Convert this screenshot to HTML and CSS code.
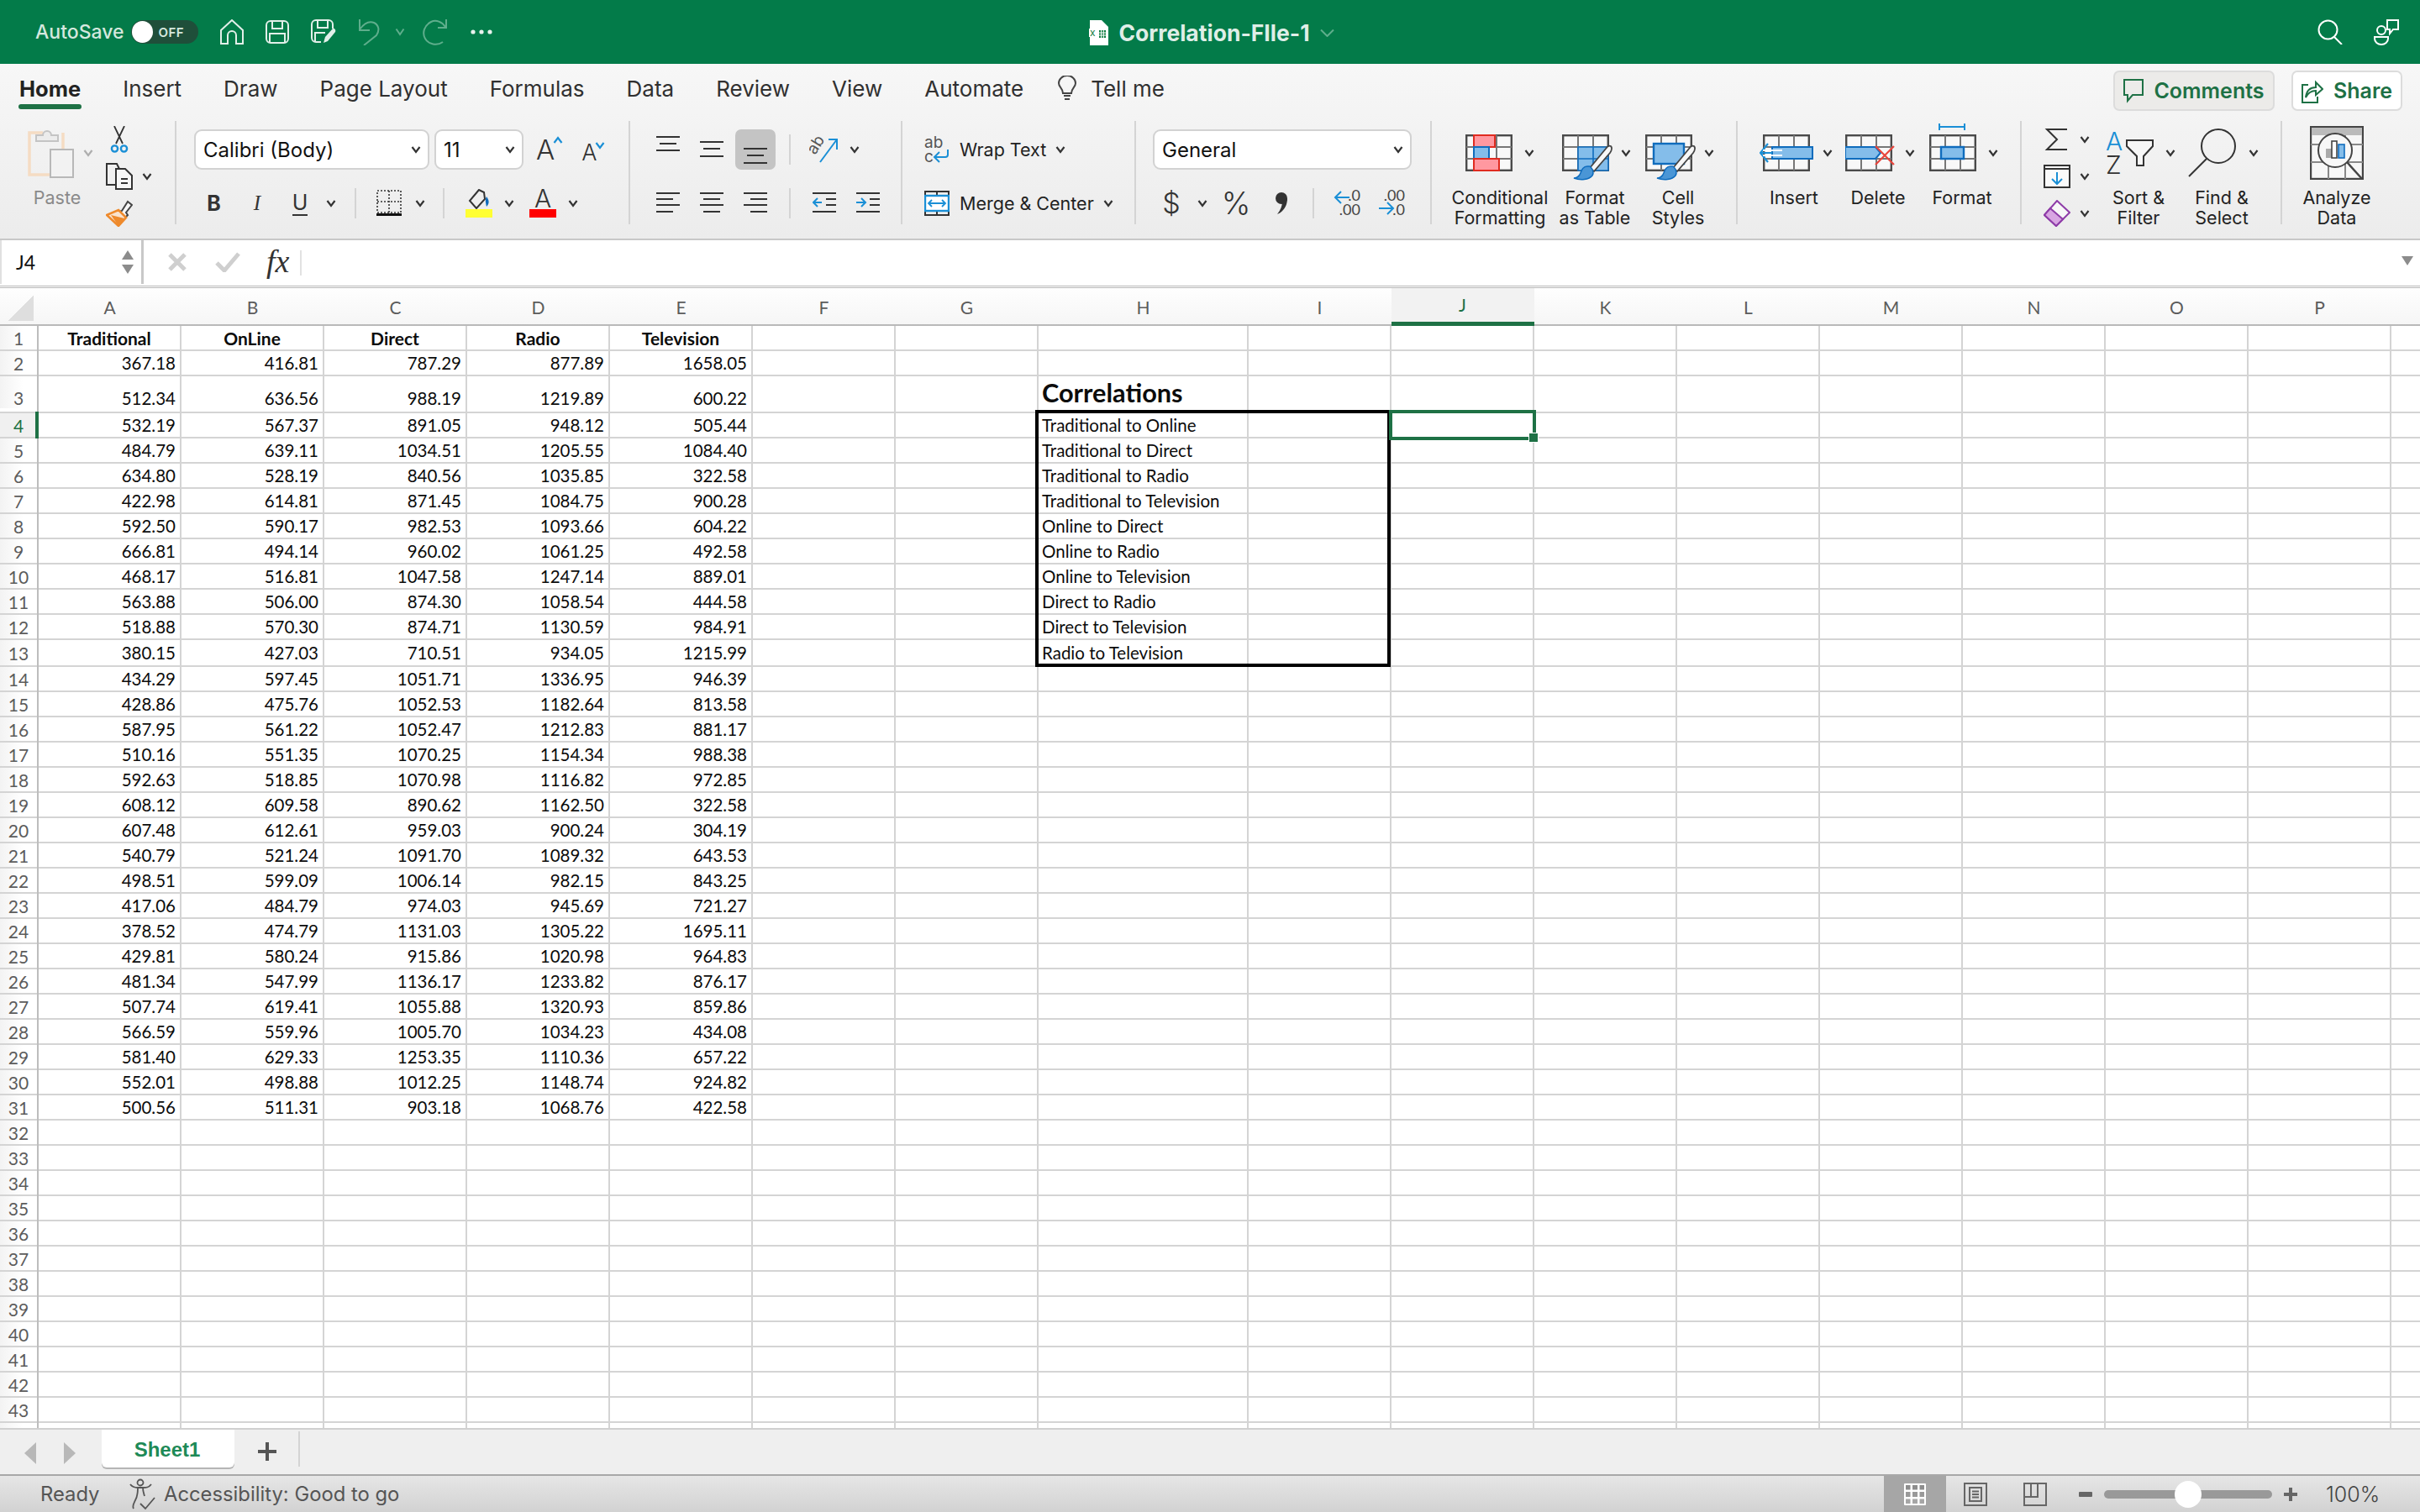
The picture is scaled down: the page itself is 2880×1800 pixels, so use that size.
FILE: index.html
```html
<!DOCTYPE html>
<html lang="en">
<head>
<meta charset="utf-8">
<title>Correlation-FIle-1</title>
<link rel="stylesheet" href="styles.css">
</head>
<body>
<svg class="sprite" width="0" height="0">
  <defs>
    <symbol id="chev" viewBox="0 0 12 10"><path d="M1.5 2 L6 8 L10.5 2" fill="none" stroke="#333" stroke-width="2.2"/></symbol>
    <g id="brush">
      <path d="M58 14 C56 13 54 14 52 17 L33 40 L38 44 L57 22 C59 19 60 16 58 14Z" fill="#f7f7f7" stroke="#444" stroke-width="1.8"/>
      <path d="M30 38 C24 38 23 44 21 48 C19 51 16 52 14 52 C22 55 32 54 36 49 C38 46 37 41 33 38Z" fill="#4a96d6" stroke="#0f6cbd" stroke-width="1.5"/>
    </g>
    <g id="gridlg" fill="#f8f8f8" stroke="#4a4a4a" stroke-width="2.4">
      <rect x="1.2" y="1.2" width="53.6" height="41.6"/>
      <path d="M19 1V43M37 1V43M1 15H55M1 29H55" fill="none" stroke="#777" stroke-width="2"/>
    </g>
  </defs>
</svg>

<header class="titlebar">
  <div class="tb-left">
    <span class="autosave">AutoSave</span>
    <span class="toggle"><i class="knob"></i><span class="off">OFF</span></span>
    <svg class="ic-home" width="28" height="30" viewBox="0 0 28 30"><path d="M1 13 L14 1 L27 13 V29 H19 V19 a5 5 0 0 0 -10 0 V29 H1Z" fill="none" stroke="#e2efe9" stroke-width="2"/></svg>
    <svg width="28" height="28" viewBox="0 0 28 28"><g fill="none" stroke="#e2efe9" stroke-width="2"><rect x="1" y="1" width="26" height="26" rx="5"/><path d="M8 1V10H20V1M5 27V16H23V27"/></g></svg>
    <svg width="30" height="30" viewBox="0 0 30 30"><g fill="none" stroke="#e2efe9" stroke-width="2"><path d="M12 27H6 a5 5 0 0 1 -5 -5 V6 a5 5 0 0 1 5 -5 H21 a5 5 0 0 1 5 5 V11"/><path d="M8 1V10H20V1M5 27V16H17"/></g><path d="M15 28 L17 21 L26 11 C28 10 30 13 29 15 L20 26Z" fill="#e2efe9"/></svg>
    <svg class="dim" width="26" height="32" viewBox="0 0 26 32"><path d="M2 1 V14 H14 M2 13 C8 5 14 3 19 5 C25 8 26 14 22 20 L7 32" fill="none" stroke="#5fae8c" stroke-width="2"/></svg>
    <svg class="tight" width="12" height="10" viewBox="0 0 12 10"><path d="M1.5 1.5 L6 8 L10.5 1.5" fill="none" stroke="#5fae8c" stroke-width="2"/></svg>
    <svg class="tight2" width="32" height="32" viewBox="0 0 32 32"><path d="M29 1 V11 H19 M28 10 C24 4 17 1 11 4 C3 8 0 17 4 24 C8 31 18 33 25 28" fill="none" stroke="#5fae8c" stroke-width="2"/></svg>
    <svg width="26" height="6" viewBox="0 0 26 6"><circle cx="3" cy="3" r="2.6" fill="#e8f2ed"/><circle cx="13" cy="3" r="2.6" fill="#e8f2ed"/><circle cx="23" cy="3" r="2.6" fill="#e8f2ed"/></svg>
  </div>
  <div class="doc">
    <svg width="23" height="30" viewBox="0 0 23 30"><path d="M1 0 H15 L23 8 V30 H1Z" fill="#fff"/><rect x="0" y="10" width="10" height="10" fill="#fff"/><text class="st" x="1" y="19" font-size="12" fill="#107c41">x</text><path d="M12 12H20V21H12Z" fill="#107c41"/><path d="M14.6 12V21M17.3 12V21M12 15H20M12 18H20" stroke="#fff"/></svg>
    <span class="docname">Correlation-FIle-1</span>
    <svg width="17" height="10" viewBox="0 0 17 10"><path d="M1 1.5 L8.5 9 L16 1.5" fill="none" stroke="#5fae8c" stroke-width="2"/></svg>
  </div>
  <div class="tb-right">
    <svg width="30" height="30" viewBox="0 0 30 30"><circle cx="12.5" cy="12.5" r="11" fill="none" stroke="#fff" stroke-width="2"/><path d="M20 21 L29 30" stroke="#fff" stroke-width="2"/></svg>
    <svg width="32" height="32" viewBox="0 0 32 32"><g fill="none" stroke="#fff" stroke-width="2"><circle cx="10" cy="14" r="5"/><path d="M2 22 H18 V24 a8 7 0 0 1 -16 0Z"/><path d="M17 2 H30 V13 H24 L20 18 V13 H17Z"/></g></svg>
  </div>
</header>

<section class="ribbon">
  <nav class="tabs">
    <span class="tab on">Home</span>
    <span class="tab">Insert</span>
    <span class="tab">Draw</span>
    <span class="tab">Page Layout</span>
    <span class="tab">Formulas</span>
    <span class="tab">Data</span>
    <span class="tab">Review</span>
    <span class="tab">View</span>
    <span class="tab">Automate</span>
    <svg class="bulb" width="24" height="30" viewBox="0 0 24 30"><path d="M7 21 C7 15 2 14 2 9 a10 9 0 0 1 20 0 C22 14 17 15 17 21Z M8 24H16M9 28H15" fill="none" stroke="#444" stroke-width="2"/></svg>
    <span class="tab tell">Tell me</span>
    <div class="actions">
      <span class="btn comments"><svg width="24" height="30" viewBox="0 0 24 30"><path d="M1 2 H23 V20 H11 L5 27 V20 H1Z" fill="none" stroke="#1e7145" stroke-width="2"/></svg>Comments</span>
      <span class="btn share"><svg width="26" height="30" viewBox="0 0 26 30"><path d="M8 8 H1 V29 H19 V22" fill="none" stroke="#1e7145" stroke-width="2"/><path d="M5 23 C6 14 11 11 17 11 V5 L25 13 L17 20 V15 C12 15 8 17 5 23Z" fill="none" stroke="#1e7145" stroke-width="2"/></svg>Share</span>
    </div>
  </nav>

  <div class="groups">
    <div class="g g-clip">
      <div class="big paste">
        <div class="top">
          <svg width="56" height="60" viewBox="0 0 56 60"><path d="M18 6 H2 V56 H30" fill="none" stroke="#f5dcc3" stroke-width="3.5"/><path d="M42 6 V26" stroke="#f5dcc3" stroke-width="3.5"/><path d="M10 16 V9 H18 a5 5 0 0 1 10 0 H36 V16Z" fill="#ececec" stroke="#c4c4c4" stroke-width="2"/><rect x="27" y="26" width="27" height="33" fill="#f2f2f2" stroke="#b8b8b8" stroke-width="2"/></svg>
          <svg class="chev faded"><use href="#chev"/></svg>
        </div>
        <span class="lab muted">Paste</span>
      </div>
      <div class="stack">
        <div class="si"><svg width="32" height="32" viewBox="0 0 32 32"><path d="M10 0 L20 21 M22 0 L12 21" stroke="#333" stroke-width="1.8"/><circle cx="10.5" cy="27" r="3.6" fill="none" stroke="#1a8fd6" stroke-width="2.4"/><circle cx="21.5" cy="27" r="3.6" fill="none" stroke="#1a8fd6" stroke-width="2.4"/></svg></div>
        <div class="si"><svg width="32" height="32" viewBox="0 0 32 32"><path d="M12 26 H1 V1 H13 L16 7" fill="none" stroke="#333" stroke-width="2"/><path d="M12 7 H23 L31 15 V31 H12Z M18 19H26M18 24H26" fill="#f7f7f7" stroke="#333" stroke-width="2"/></svg><svg class="chev"><use href="#chev"/></svg></div>
        <div class="si"><svg width="32" height="32" viewBox="0 0 32 32"><path d="M19 13 L26 2 L31 6 L24 15 L26 18 L23 21 L16 14Z" fill="#f7f7f7" stroke="#444" stroke-width="2"/><path d="M15 12 L24 21 L15 31 L1 18Z" fill="#f9e3cf" stroke="#ee8a2c" stroke-width="2.6"/><path d="M6 18 L15 31 L22 22Z" fill="#ee8a2c"/></svg></div>
      </div>
    </div>

    <div class="g g-font">
      <div class="line1 flex">
        <span class="dd dd-font">Calibri (Body)<svg class="chev"><use href="#chev"/></svg></span>
        <span class="dd dd-size">11<svg class="chev"><use href="#chev"/></svg></span>
        <span class="grow">A<svg width="12" height="10" viewBox="0 0 12 10"><path d="M1.5 8 L6 2 L10.5 8" fill="none" stroke="#1a8fd6" stroke-width="2.2"/></svg></span>
        <span class="shrink">A<svg width="12" height="10" viewBox="0 0 12 10"><path d="M1.5 2 L6 8 L10.5 2" fill="none" stroke="#1a8fd6" stroke-width="2.2"/></svg></span>
      </div>
      <div class="line2 font-tracks">
        <b class="fb">B</b>
        <i class="fi">I</i>
        <span class="fu">U</span>
        <svg class="chev"><use href="#chev"/></svg>
        <span class="vsep"></span>
        <svg width="30" height="32" viewBox="0 0 30 32"><path d="M1 1H29V27H1ZM15 1V27M1 14H29" fill="none" stroke="#333" stroke-width="1.6" stroke-dasharray="2 2"/><rect x="0" y="28" width="30" height="3" fill="#111"/></svg>
        <svg class="chev"><use href="#chev"/></svg>
        <span class="vsep"></span>
        <svg width="32" height="34" viewBox="0 0 32 34"><path d="M16 1 L5 14 L13 23 L23 12 L22 4Z" fill="none" stroke="#333" stroke-width="2"/><path d="M25 9 C28 13 29 17 25 21 C24 16 23 13 25 9Z" fill="#0f6cbd"/><rect x="0" y="24" width="32" height="10" fill="#ffff33"/></svg>
        <svg class="chev"><use href="#chev"/></svg>
        <svg width="32" height="34" viewBox="0 0 32 34"><text class="st thin" x="16" y="22" font-size="30" text-anchor="middle" fill="#333">A</text><rect x="0" y="24" width="32" height="10" fill="#ff0000"/></svg>
        <svg class="chev"><use href="#chev"/></svg>
      </div>
    </div>

    <div class="g g-align">
      <div class="line1 align-tracks">
        <svg width="48" height="48" viewBox="0 0 48 48"><path d="M10 9H38M14 17H34M10 25H38" stroke="#333" stroke-width="2"/></svg>
        <svg width="48" height="48" viewBox="0 0 48 48"><path d="M10 15H38M14 23H34M10 32H38" stroke="#333" stroke-width="2"/></svg>
        <svg class="pressed" width="48" height="48" viewBox="0 0 48 48"><path d="M10 23H38M14 31H34M10 40H38" stroke="#333" stroke-width="2"/></svg>
        <span class="vsep short"></span>
        <svg width="36" height="34" viewBox="0 0 36 34"><text class="st" x="0" y="0" font-size="19" fill="#555" transform="translate(7 24) rotate(-58)">ab</text><path d="M13 32 L33 5 M23 5 H33 V17" fill="none" stroke="#1a8fd6" stroke-width="2"/></svg>
        <svg class="chev orient-chev"><use href="#chev"/></svg>
      </div>
      <div class="line2 align-tracks">
        <svg width="28" height="28" viewBox="0 0 28 28"><path d="M0 2H28M0 9H20M0 16H28M0 24H20" stroke="#333" stroke-width="2"/></svg>
        <svg width="28" height="28" viewBox="0 0 28 28"><path d="M0 2H28M4 9H24M0 16H28M4 24H24" stroke="#333" stroke-width="2"/></svg>
        <svg width="28" height="28" viewBox="0 0 28 28"><path d="M0 2H28M8 9H28M0 16H28M8 24H28" stroke="#333" stroke-width="2"/></svg>
        <span class="vsep"></span>
        <svg width="28" height="28" viewBox="0 0 28 28"><path d="M0 2H28M16 9H28M16 16H28M0 24H28" stroke="#333" stroke-width="2"/><path d="M11 13H1M6 8L1 13L6 18" fill="none" stroke="#1a8fd6" stroke-width="2"/></svg>
        <svg width="28" height="28" viewBox="0 0 28 28"><path d="M0 2H28M16 9H28M16 16H28M0 24H28" stroke="#333" stroke-width="2"/><path d="M0 13H11M6 8L11 13L6 18" fill="none" stroke="#1a8fd6" stroke-width="2"/></svg>
      </div>
    </div>

    <div class="g g-wrap">
      <div class="line1 flex wrapline">
        <svg width="30" height="34" viewBox="0 0 30 34"><text class="st" x="0" y="15" font-size="19" fill="#555">ab</text><text class="st" x="0" y="32" font-size="19" fill="#555">c</text><path d="M28 17 V23 a3 3 0 0 1 -3 3 H13 M18 20 L12 26 L18 32" fill="none" stroke="#1a8fd6" stroke-width="2"/></svg>
        <span class="wtxt">Wrap Text</span>
        <svg class="chev"><use href="#chev"/></svg>
      </div>
      <div class="line2 flex wrapline">
        <svg width="30" height="30" viewBox="0 0 30 30"><rect x="1" y="1" width="28" height="28" fill="none" stroke="#333" stroke-width="2"/><path d="M15 1V6M15 24V29" stroke="#333" stroke-width="2"/><rect x="1" y="6" width="28" height="18" fill="#fff" stroke="#1a8fd6" stroke-width="2.4"/><path d="M5 15H25M9 11L5 15L9 19M21 11L25 15L21 19" fill="none" stroke="#1a8fd6" stroke-width="1.8"/></svg>
        <span class="wtxt">Merge &amp; Center</span>
        <svg class="chev"><use href="#chev"/></svg>
      </div>
    </div>

    <div class="g g-num">
      <div class="line1"><span class="dd dd-gen">General<svg class="chev"><use href="#chev"/></svg></span></div>
      <div class="line2 num-tracks">
        <span class="glyph">$</span>
        <svg class="chev"><use href="#chev"/></svg>
        <span class="glyph pct">%</span>
        <svg width="14" height="28" viewBox="0 0 14 28"><circle cx="7" cy="8" r="7" fill="#333"/><path d="M14 8 C14 18 9 24 2 27 C6 22 8 17 8 12Z" fill="#333"/></svg>
        <span class="vsep"></span>
        <svg width="34" height="34" viewBox="0 0 34 34"><text class="dec" x="32" y="14" font-size="18" fill="#444" text-anchor="end">.0</text><text class="dec" x="32" y="31" font-size="18" fill="#444" text-anchor="end">.00</text><path d="M19 10H2M9 3L2 10L9 17" fill="none" stroke="#1a8fd6" stroke-width="2"/></svg>
        <svg width="34" height="34" viewBox="0 0 34 34"><text class="dec" x="33" y="14" font-size="18" fill="#444" text-anchor="end">.00</text><text class="dec" x="33" y="31" font-size="18" fill="#444" text-anchor="end">.0</text><path d="M2 23H19M12 16L19 23L12 30" fill="none" stroke="#1a8fd6" stroke-width="2"/></svg>
      </div>
    </div>

    <div class="g g-styles flex">
      <div class="big w118">
        <div class="top">
          <svg class="ovf" width="56" height="44" viewBox="0 0 56 44"><use href="#gridlg"/><rect x="10" y="1" width="25" height="14" fill="#ff98a0" stroke="#e02b20" stroke-width="2"/><rect x="10" y="15" width="18" height="14" fill="#84bdea" stroke="#0f6cbd" stroke-width="2"/><rect x="10" y="29" width="30" height="14" fill="#ff98a0" stroke="#e02b20" stroke-width="2"/></svg>
          <svg class="chev"><use href="#chev"/></svg>
        </div>
        <span class="lab">Conditional<br>Formatting</span>
      </div>
      <div class="big w108">
        <div class="top nudge">
          <svg class="ovf" width="56" height="44" viewBox="0 0 56 44"><use href="#gridlg"/><path d="M19 15H55V43H19Z" fill="#84bdea" stroke="#0f6cbd" stroke-width="1.6"/><path d="M37 15V43M19 29H55" stroke="#0f6cbd" stroke-width="1.6"/><use href="#brush"/></svg>
          <svg class="chev"><use href="#chev"/></svg>
        </div>
        <span class="lab">Format<br>as Table</span>
      </div>
      <div class="big w90">
        <div class="top nudge">
          <svg class="ovf" width="56" height="44" viewBox="0 0 56 44"><use href="#gridlg"/><rect x="10" y="11" width="36" height="24" fill="#84bdea" stroke="#0f6cbd" stroke-width="2.4"/><use href="#brush"/></svg>
          <svg class="chev"><use href="#chev"/></svg>
        </div>
        <span class="lab">Cell<br>Styles</span>
      </div>
    </div>

    <div class="g g-cells flex">
      <div class="big w92">
        <div class="top nudge narrow">
          <svg width="64" height="44" viewBox="0 0 64 44"><g transform="translate(4 0)"><use href="#gridlg"/></g><rect x="15" y="15" width="48" height="14" fill="#84bdea" stroke="#0f6cbd" stroke-width="2"/><path d="M15 22H2M10 11L1 22L10 33" fill="none" stroke="#1a8fd6" stroke-width="2.2"/><path d="M4 19H27M4 25H27" stroke="#fff" stroke-width="2"/></svg>
          <svg class="chev"><use href="#chev"/></svg>
        </div>
        <span class="lab">Insert</span>
      </div>
      <div class="big w92 gapl">
        <div class="top nudge narrow">
          <svg width="60" height="44" viewBox="0 0 60 44"><use href="#gridlg"/><path d="M0 15H36L42 22L36 29H0Z" fill="#84bdea" stroke="#0f6cbd" stroke-width="2"/><path d="M36 14 L58 36 M58 14 L36 36" stroke="#e8453c" stroke-width="2.2"/></svg>
          <svg class="chev"><use href="#chev"/></svg>
        </div>
        <span class="lab">Delete</span>
      </div>
      <div class="big w92 gapl">
        <div class="top nudge">
          <svg class="ovf" width="56" height="44" viewBox="0 0 56 44"><path d="M12 -9H42M12 -13V-5M42 -13V-5" stroke="#1a8fd6" stroke-width="2"/><use href="#gridlg"/><rect x="14" y="15" width="27" height="14" fill="#84bdea" stroke="#0f6cbd" stroke-width="2.4"/></svg>
          <svg class="chev"><use href="#chev"/></svg>
        </div>
        <span class="lab">Format</span>
      </div>
    </div>

    <div class="g g-edit flex">
      <div class="stack">
        <div class="si"><svg width="32" height="28" viewBox="0 0 32 28"><path d="M28 2 H4 L16 14 L4 26 H28" fill="none" stroke="#333" stroke-width="2"/></svg><svg class="chev"><use href="#chev"/></svg></div>
        <div class="si"><svg width="32" height="28" viewBox="0 0 32 28"><rect x="1" y="1" width="30" height="26" fill="#fafafa" stroke="#333" stroke-width="2"/><path d="M1 5H31" stroke="#333" stroke-width="2"/><path d="M16 9V23M10 17L16 23L22 17" fill="none" stroke="#1a8fd6" stroke-width="2"/></svg><svg class="chev"><use href="#chev"/></svg></div>
        <div class="si"><svg width="32" height="32" viewBox="0 0 32 32"><path d="M16 1 L31 15 L15 31 L1 18Z" fill="#f7f7f7" stroke="#8e3ca8" stroke-width="2"/><path d="M8 10 L23 23 L15 31 L1 18Z" fill="#d8a5e2" stroke="#8e3ca8" stroke-width="2"/></svg><svg class="chev"><use href="#chev"/></svg></div>
      </div>
      <div class="big w90 sort">
        <div class="top nudge">
          <svg width="57" height="54" viewBox="0 0 57 54"><text class="st thin" x="0" y="24" font-size="30" fill="#1a8fd6">A</text><text class="st thin" x="0" y="52" font-size="30" fill="#333">Z</text><path d="M25 12 H56 V19 L45 31 V42 H37 V31 L25 19Z" fill="#f7f7f7" stroke="#333" stroke-width="2"/></svg>
          <svg class="chev"><use href="#chev"/></svg>
        </div>
        <span class="lab">Sort &amp;<br>Filter</span>
      </div>
      <div class="big w92 find">
        <div class="top nudge">
          <svg width="58" height="58" viewBox="0 0 58 58"><circle cx="36" cy="21" r="20" fill="none" stroke="#333" stroke-width="2"/><path d="M22 36 L1 57" stroke="#333" stroke-width="2"/></svg>
          <svg class="chev"><use href="#chev"/></svg>
        </div>
        <span class="lab">Find &amp;<br>Select</span>
      </div>
    </div>

    <div class="g g-an">
      <div class="big w100">
        <div class="top">
          <svg width="64" height="64" viewBox="0 0 64 64"><rect x="1" y="1" width="62" height="62" fill="#f7f7f7" stroke="#444" stroke-width="2.4"/><rect x="2" y="2" width="60" height="9" fill="#bbb"/><path d="M1 22H63M1 43H63M22 11V63M42 11V63" stroke="#888" stroke-width="2"/><path d="M44 43 L63 64" stroke="#444" stroke-width="2.4"/><circle cx="30" cy="29" r="20" fill="#f7f7f7" stroke="#444" stroke-width="2"/><rect x="19" y="27" width="7" height="11" fill="#aaa"/><rect x="26" y="18" width="6" height="20" fill="#fff" stroke="#444" stroke-width="1.6"/><rect x="34" y="22" width="7" height="16" fill="#84bdea" stroke="#0f6cbd" stroke-width="1.6"/></svg>
        </div>
        <span class="lab">Analyze<br>Data</span>
      </div>
    </div>
  </div>
</section>

<section class="fbar">
  <div class="namebox">
    <span class="cellref">J4</span>
    <span class="spin"><i class="tri up"></i><i class="tri down"></i></span>
  </div>
  <svg class="fb-x" width="24" height="24" viewBox="0 0 24 24"><path d="M3 3 L21 21 M21 3 L3 21" stroke="#cfcfcf" stroke-width="5"/></svg>
  <svg class="fb-c" width="30" height="24" viewBox="0 0 30 24"><path d="M2 13 L11 22 L28 2" fill="none" stroke="#cfcfcf" stroke-width="5"/></svg>
  <span class="fx">fx</span>
  <span class="fbsep"></span>
  <i class="tri down big-tri"></i>
</section>

<main class="sheet">
  <div class="colhead">
    <span class="corner"><i></i></span>
    <span class="ch">A</span><span class="ch">B</span><span class="ch">C</span><span class="ch">D</span><span class="ch">E</span><span class="ch">F</span><span class="ch">G</span>
    <span class="ch wide">H</span><span class="ch">I</span><span class="ch cur">J</span><span class="ch">K</span><span class="ch">L</span><span class="ch">M</span><span class="ch">N</span><span class="ch">O</span><span class="ch">P</span><span class="ch"></span>
  </div>

  <div class="rows">
    <div class="row"><span class="rh">1</span><span class="hd">Traditional</span><span class="hd">OnLine</span><span class="hd">Direct</span><span class="hd">Radio</span><span class="hd">Television</span></div>
    <div class="row"><span class="rh">2</span><span class="n">367.18</span><span class="n">416.81</span><span class="n">787.29</span><span class="n">877.89</span><span class="n">1658.05</span></div>
    <div class="row tall"><span class="rh">3</span><span class="n">512.34</span><span class="n">636.56</span><span class="n">988.19</span><span class="n">1219.89</span><span class="n">600.22</span><span class="title">Correlations</span></div>
    <div class="row"><span class="rh curh">4</span><span class="n">532.19</span><span class="n">567.37</span><span class="n">891.05</span><span class="n">948.12</span><span class="n">505.44</span><span class="t">Traditional to Online</span></div>
    <div class="row"><span class="rh">5</span><span class="n">484.79</span><span class="n">639.11</span><span class="n">1034.51</span><span class="n">1205.55</span><span class="n">1084.40</span><span class="t">Traditional to Direct</span></div>
    <div class="row"><span class="rh">6</span><span class="n">634.80</span><span class="n">528.19</span><span class="n">840.56</span><span class="n">1035.85</span><span class="n">322.58</span><span class="t">Traditional to Radio</span></div>
    <div class="row"><span class="rh">7</span><span class="n">422.98</span><span class="n">614.81</span><span class="n">871.45</span><span class="n">1084.75</span><span class="n">900.28</span><span class="t">Traditional to Television</span></div>
    <div class="row"><span class="rh">8</span><span class="n">592.50</span><span class="n">590.17</span><span class="n">982.53</span><span class="n">1093.66</span><span class="n">604.22</span><span class="t">Online to Direct</span></div>
    <div class="row"><span class="rh">9</span><span class="n">666.81</span><span class="n">494.14</span><span class="n">960.02</span><span class="n">1061.25</span><span class="n">492.58</span><span class="t">Online to Radio</span></div>
    <div class="row"><span class="rh">10</span><span class="n">468.17</span><span class="n">516.81</span><span class="n">1047.58</span><span class="n">1247.14</span><span class="n">889.01</span><span class="t">Online to Television</span></div>
    <div class="row"><span class="rh">11</span><span class="n">563.88</span><span class="n">506.00</span><span class="n">874.30</span><span class="n">1058.54</span><span class="n">444.58</span><span class="t">Direct to Radio</span></div>
    <div class="row"><span class="rh">12</span><span class="n">518.88</span><span class="n">570.30</span><span class="n">874.71</span><span class="n">1130.59</span><span class="n">984.91</span><span class="t">Direct to Television</span></div>
    <div class="row r13"><span class="rh">13</span><span class="n">380.15</span><span class="n">427.03</span><span class="n">710.51</span><span class="n">934.05</span><span class="n">1215.99</span><span class="t">Radio to Television</span></div>
    <div class="row"><span class="rh">14</span><span class="n">434.29</span><span class="n">597.45</span><span class="n">1051.71</span><span class="n">1336.95</span><span class="n">946.39</span></div>
    <div class="row"><span class="rh">15</span><span class="n">428.86</span><span class="n">475.76</span><span class="n">1052.53</span><span class="n">1182.64</span><span class="n">813.58</span></div>
    <div class="row"><span class="rh">16</span><span class="n">587.95</span><span class="n">561.22</span><span class="n">1052.47</span><span class="n">1212.83</span><span class="n">881.17</span></div>
    <div class="row"><span class="rh">17</span><span class="n">510.16</span><span class="n">551.35</span><span class="n">1070.25</span><span class="n">1154.34</span><span class="n">988.38</span></div>
    <div class="row"><span class="rh">18</span><span class="n">592.63</span><span class="n">518.85</span><span class="n">1070.98</span><span class="n">1116.82</span><span class="n">972.85</span></div>
    <div class="row"><span class="rh">19</span><span class="n">608.12</span><span class="n">609.58</span><span class="n">890.62</span><span class="n">1162.50</span><span class="n">322.58</span></div>
    <div class="row"><span class="rh">20</span><span class="n">607.48</span><span class="n">612.61</span><span class="n">959.03</span><span class="n">900.24</span><span class="n">304.19</span></div>
    <div class="row"><span class="rh">21</span><span class="n">540.79</span><span class="n">521.24</span><span class="n">1091.70</span><span class="n">1089.32</span><span class="n">643.53</span></div>
    <div class="row"><span class="rh">22</span><span class="n">498.51</span><span class="n">599.09</span><span class="n">1006.14</span><span class="n">982.15</span><span class="n">843.25</span></div>
    <div class="row"><span class="rh">23</span><span class="n">417.06</span><span class="n">484.79</span><span class="n">974.03</span><span class="n">945.69</span><span class="n">721.27</span></div>
    <div class="row"><span class="rh">24</span><span class="n">378.52</span><span class="n">474.79</span><span class="n">1131.03</span><span class="n">1305.22</span><span class="n">1695.11</span></div>
    <div class="row"><span class="rh">25</span><span class="n">429.81</span><span class="n">580.24</span><span class="n">915.86</span><span class="n">1020.98</span><span class="n">964.83</span></div>
    <div class="row"><span class="rh">26</span><span class="n">481.34</span><span class="n">547.99</span><span class="n">1136.17</span><span class="n">1233.82</span><span class="n">876.17</span></div>
    <div class="row"><span class="rh">27</span><span class="n">507.74</span><span class="n">619.41</span><span class="n">1055.88</span><span class="n">1320.93</span><span class="n">859.86</span></div>
    <div class="row"><span class="rh">28</span><span class="n">566.59</span><span class="n">559.96</span><span class="n">1005.70</span><span class="n">1034.23</span><span class="n">434.08</span></div>
    <div class="row"><span class="rh">29</span><span class="n">581.40</span><span class="n">629.33</span><span class="n">1253.35</span><span class="n">1110.36</span><span class="n">657.22</span></div>
    <div class="row"><span class="rh">30</span><span class="n">552.01</span><span class="n">498.88</span><span class="n">1012.25</span><span class="n">1148.74</span><span class="n">924.82</span></div>
    <div class="row"><span class="rh">31</span><span class="n">500.56</span><span class="n">511.31</span><span class="n">903.18</span><span class="n">1068.76</span><span class="n">422.58</span></div>
    <div class="row"><span class="rh">32</span></div>
    <div class="row"><span class="rh">33</span></div>
    <div class="row"><span class="rh">34</span></div>
    <div class="row"><span class="rh">35</span></div>
    <div class="row"><span class="rh">36</span></div>
    <div class="row"><span class="rh">37</span></div>
    <div class="row"><span class="rh">38</span></div>
    <div class="row"><span class="rh">39</span></div>
    <div class="row"><span class="rh">40</span></div>
    <div class="row"><span class="rh">41</span></div>
    <div class="row"><span class="rh">42</span></div>
    <div class="row"><span class="rh">43</span></div>
    <div class="row"><span class="rh"></span></div>
  </div>

  <div class="vlines">
    <i class="vl v-rh"></i><i class="vl"></i><i class="vl"></i><i class="vl"></i><i class="vl"></i><i class="vl"></i><i class="vl"></i><i class="vl"></i><i class="vl wide"></i><i class="vl"></i><i class="vl"></i><i class="vl"></i><i class="vl"></i><i class="vl"></i><i class="vl"></i><i class="vl"></i><i class="vl"></i>
  </div>
  <div class="rowmark"></div>
  <div class="blackbox"></div>
  <div class="selection"><i class="handle"></i></div>
</main>

<section class="tabbar">
  <i class="nav left"></i>
  <i class="nav right"></i>
  <span class="sheettab">Sheet1</span>
  <svg class="plus" width="22" height="22" viewBox="0 0 22 22"><path d="M11 0V22M0 11H22" stroke="#555" stroke-width="4"/></svg>
  <span class="tabsep"></span>
</section>

<footer class="status">
  <span class="ready">Ready</span>
  <svg class="acc" width="32" height="38" viewBox="0 0 32 38"><g fill="none" stroke="#555" stroke-width="1.8"><circle cx="13" cy="5" r="3.5"/><path d="M1 7 C4 11 8 11 10 11 H16 C20 11 23 11 26 7 M10 11 C10 17 10 21 7 26 C5 30 3 33 5 36 M16 11 C16 15 17 18 18 21"/><path d="M13 30 L19 36 L30 23"/></g></svg>
  <span class="acc-text">Accessibility: Good to go</span>
  <div class="viewctl">
    <span class="viewbtn on"><svg width="26" height="26" viewBox="0 0 26 26"><rect width="26" height="26" rx="1" fill="#fff"/><rect x="2" y="2" width="5.5" height="5.5" fill="#8d8d8d"/><rect x="10" y="2" width="6" height="5.5" fill="#8d8d8d"/><rect x="18.5" y="2" width="5.5" height="5.5" fill="#8d8d8d"/><rect x="2" y="10" width="5.5" height="6" fill="#999"/><rect x="10" y="10" width="6" height="6" fill="#999"/><rect x="18.5" y="10" width="5.5" height="6" fill="#999"/><rect x="2" y="18.5" width="5.5" height="5.5" fill="#a6a6a6"/><rect x="10" y="18.5" width="6" height="5.5" fill="#a6a6a6"/><rect x="18.5" y="18.5" width="5.5" height="5.5" fill="#a6a6a6"/></svg></span>
    <svg class="v2" width="28" height="28" viewBox="0 0 28 28"><rect x="1" y="1" width="26" height="26" fill="none" stroke="#666" stroke-width="2"/><rect x="7" y="6" width="14" height="16" fill="none" stroke="#666" stroke-width="2"/><path d="M10 10.5H18M10 14H18M10 17.5H18" stroke="#666" stroke-width="2"/></svg>
    <svg class="v3" width="28" height="28" viewBox="0 0 28 28"><rect x="1" y="1" width="26" height="26" fill="none" stroke="#666" stroke-width="2"/><path d="M1 17H17V1M9 1V17" fill="none" stroke="#666" stroke-width="2"/></svg>
    <svg class="zm" width="16" height="6" viewBox="0 0 16 6"><rect width="16" height="6" rx="1" fill="#666"/></svg>
    <span class="slider"><i class="thumb"></i></span>
    <svg class="zp" width="16" height="16" viewBox="0 0 16 16"><path d="M8 0V16M0 8H16" stroke="#666" stroke-width="4"/></svg>
    <span class="zoom">100%</span>
  </div>
</footer>
</body>
</html>
```

FILE: styles.css
```css
* { box-sizing: border-box; }
html, body { margin: 0; padding: 0; }
body {
  width: 2880px;
  height: 1800px;
  overflow: hidden;
  display: flex;
  flex-direction: column;
  font-family: Inter, "Liberation Sans", sans-serif;
  background: #fff;
  color: #222;
}
svg { flex: none; display: block; }
.sprite { position: absolute; }
.st { font-family: Inter, "Liberation Sans", sans-serif; }
.dec { font-family: Lato, sans-serif; }
.thin { font-weight: 300; }
.ovf { overflow: visible; }
.flex { display: flex; }

/* Title bar */
.titlebar {
  height: 76px;
  flex: none;
  background: #037b49;
  display: grid;
  grid-template-columns: 1fr auto 1fr;
  align-items: center;
}
.tb-left { display: flex; align-items: center; gap: 26px; padding-left: 42px; }
.autosave { font-size: 23px; font-weight: 500; color: #d5e8de; margin-right: -18px; }
.toggle {
  width: 80px; height: 28px; border-radius: 14px;
  background: #1f4f3a;
  display: flex; align-items: center;
  padding-left: 1px;
}
.knob { width: 25px; height: 26px; border-radius: 50%; background: #fff; }
.off { font-size: 15px; font-weight: 600; color: #d5e8de; margin-left: 7px; letter-spacing: .5px; }
.tight { margin-left: -8px; }
.tight2 { margin-left: -6px; }
.doc { display: flex; align-items: center; gap: 12px; padding: 2px 0 0 4px; }
.docname { font-size: 26.5px; font-weight: 700; color: #dfeee7; }
.tb-right { display: flex; justify-content: flex-end; align-items: center; gap: 36px; padding-right: 24px; }

/* Ribbon */
.ribbon {
  height: 210px;
  flex: none;
  background: linear-gradient(#f7f7f7, #ececec);
  border-bottom: 2px solid #c8c8c8;
}
.tabs {
  height: 68px;
  display: flex;
  align-items: flex-start;
  padding: 14px 21px 0 23px;
  gap: 50px;
}
.tab { position: relative; font-size: 26px; line-height: 32px; color: #303030; }
.tab.on { font-weight: 700; color: #222; font-size: 25.5px; }
.tab.on::after {
  content: ""; position: absolute; left: -1px; right: -1px; top: 34px; height: 6px;
  border-radius: 3px; background: #1e7145;
}
.bulb { margin-left: -10px; }
.tell { margin-left: -34px; }
.actions { margin-left: auto; display: flex; gap: 20px; margin-top: -6px; }
.btn {
  height: 48px; border-radius: 7px; border: 2px solid #dcdcdc;
  display: flex; align-items: center; justify-content: center; gap: 12px;
  font-size: 25px; font-weight: 600; color: #1e7145;
}
.comments { width: 192px; background: #ecebe9; }
.share { width: 132px; background: #fff; }

.groups { display: flex; height: 123px; }
.g { flex: none; height: 123px; border-right: 2px solid #d4d4d4; }
.g-clip { width: 210px; padding-left: 20px; display: flex; }
.g-font { width: 540px; padding: 10px 0 0 21px; }
.g-align { width: 324px; padding: 10px 0 0 21px; }
.g-wrap { width: 278px; padding: 10px 0 0 26px; }
.g-num { width: 352px; padding: 10px 0 0 20px; }
.g-styles { width: 364px; padding-left: 22px; }
.g-cells { width: 338px; padding-left: 21px; }
.g-edit { width: 310px; padding-left: 26px; }
.g-an { width: 165px; border-right: 0; padding-left: 15px; }

.big { flex: none; display: flex; flex-direction: column; align-items: center; }
.big .top { flex: none; height: 76px; display: flex; align-items: center; gap: 14px; }
.big .top.nudge { padding-left: 4px; }
.big .top.narrow { gap: 11px; }
.lab { font-size: 21.5px; line-height: 24px; text-align: center; color: #222; margin-top: 3px; white-space: nowrap; }
.muted { color: #8a8a8a; }
.paste { width: 96px; }
.paste .top { padding-left: 8px; gap: 10px; }
.w118 { width: 118px; } .w108 { width: 108px; } .w100 { width: 100px; } .w92 { width: 92px; } .w90 { width: 90px; }
.gapl { margin-left: 8px; }
.sort { margin-left: 4px; }
.find { margin-left: 8px; }
.chev { width: 12px; height: 10px; }
.faded { opacity: .35; }

.stack { width: 64px; margin-left: 10px; }
.g-edit .stack { margin-left: 0; }
.si { height: 44px; display: flex; align-items: center; gap: 11px; }

.line1 { height: 48px; align-items: center; }
.line2 { height: 36px; margin-top: 22px; align-items: center; }
.font-tracks, .align-tracks, .num-tracks { display: grid; justify-items: center; align-items: center; }
.font-tracks { grid-template-columns: 47px 56px 46px 28px 30px 50px 24px 32px 52px 20px 60px 12px; }
.align-tracks { grid-template-columns: 48px 56px 48px 34px 48px 56px; }
.num-tracks { grid-template-columns: 44px 30px 50px 58px 18px 64px 40px; }
.orient-chev { justify-self: start; margin-left: 6px; }
.vsep { width: 2px; height: 36px; background: #d4d4d4; }
.pressed { background: #c4c4c4; border-radius: 7px; }

.dd {
  height: 48px; background: #fff;
  border: 2px solid #d2d2d2; border-radius: 9px;
  display: flex; align-items: center; justify-content: space-between;
  font-size: 24px; color: #111; padding: 0 8px 0 9px;
}
.dd-font { width: 280px; }
.dd-size { width: 106px; margin-left: 6px; }
.dd-gen { width: 308px; }
.grow, .shrink { font-weight: 300; color: #333; display: flex; align-items: flex-start; line-height: 1; }
.grow svg, .shrink svg { margin-left: -2px; }
.grow { font-size: 33px; margin-left: 15px; }
.shrink { font-size: 27px; margin-left: 22px; margin-top: 6px; }
.fb { font-size: 25px; font-weight: 700; color: #333; }
.fi { font-size: 25px; font-style: italic; color: #333; font-family: "Liberation Serif", serif; }
.fu { font-size: 25px; color: #333; border-bottom: 2px solid #333; line-height: 27px; }
.glyph { font-size: 34px; font-weight: 300; color: #333; line-height: 36px; }
.pct { font-size: 37px; }

.wrapline { gap: 12px; align-items: center; }
.wtxt { font-size: 21.5px; color: #222; margin-right: -1px; white-space: nowrap; }

/* Formula bar */
.fbar {
  height: 57px; flex: none;
  display: flex; align-items: flex-start;
  border-bottom: 3px double #b8b8b8;
  background: #fff;
}
.namebox {
  width: 171px; height: 52px;
  border-left: 2px solid #e0e0e0;
  border-right: 3px solid #c8c8c8;
  display: flex; align-items: center; justify-content: space-between;
  padding: 0 9px 0 17px;
}
.cellref { font-size: 23px; color: #111; font-family: Lato, sans-serif; }
.spin { display: flex; flex-direction: column; gap: 6px; }
.tri { display: block; width: 0; height: 0; border-left: 7px solid transparent; border-right: 7px solid transparent; }
.tri.up { border-bottom: 11px solid #8c8c8c; }
.tri.down { border-top: 11px solid #8c8c8c; }
.fb-x { margin: 14px 0 0 28px; }
.fb-c { margin: 14px 0 0 33px; }
.fx { font-family: "Liberation Serif", serif; font-style: italic; font-size: 38px; color: #333; margin: 3px 0 0 31px; line-height: 44px; }
.fbsep { width: 2px; height: 30px; background: #e2e2e2; margin: 12px 0 0 13px; }
.big-tri { margin: 19px 8px 0 auto; }

/* Sheet */
.sheet { position: relative; height: 1359px; flex: none; overflow: hidden; border-bottom: 2px solid #d0d0d0; font-family: Lato, sans-serif; }
.colhead {
  height: 45px; display: flex;
  background: linear-gradient(#fefefe, #f6f6f6);
  border-bottom: 2px solid #b9b9b9;
}
.corner { width: 46px; flex: none; padding: 9px 0 0 10px; }
.corner i {
  display: block; width: 30px; height: 30px;
  background: linear-gradient(135deg, transparent 50%, #dedede 50%);
}
.ch {
  width: 170px; flex: none; height: 45px;
  display: flex; align-items: center; justify-content: center;
  font-size: 21px; color: #5c5c5c; padding: 0 1px 1px 0;
}
.ch.wide { width: 250px; }
.ch.cur { background: #f2f2f2; color: #1e7145; border-bottom: 5px solid #1e7145; }
.row {
  height: 30px;
  display: grid;
  grid-template-columns: 46px repeat(7, 170px) 250px;
  align-items: center;
  border-bottom: 2px solid #d4d4d4;
  font-size: 20.5px;
  color: #0c0c0c;
}
.row.tall { height: 44px; align-items: end; padding-bottom: 4px; }
.row.r13 { height: 32px; }
.rh {
  font-size: 21px; color: #5c5c5c; text-align: center; padding-right: 2px;
  background: linear-gradient(90deg, #f3f3f3, #fff 60%);
  height: 100%; display: flex; align-items: center; justify-content: center;
}
.tall .rh { align-items: flex-end; }
.rh.curh { background: #f0f0f0; color: #1e7145; }
.n { text-align: right; padding-right: 7px; }
.hd { text-align: center; font-weight: 700; font-size: 21px; padding-right: 2px; }
.t, .title { grid-column: 9; padding-left: 4px; white-space: nowrap; }
.t { font-size: 20.5px; }
.title { font-size: 30.7px; font-weight: 700; line-height: 36px; }
.vlines { position: absolute; left: 0; top: 45px; bottom: 0; display: flex; }
.vl { width: 170px; flex: none; border-right: 2px solid #d4d4d4; }
.vl.v-rh { width: 46px; border-right-color: #bdbdbd; }
.vl.wide { width: 250px; }
.rowmark { position: absolute; left: 42px; top: 147px; width: 4px; height: 32px; background: #1e7145; }
.blackbox { position: absolute; left: 1232px; top: 145px; width: 423px; height: 306px; border: 4px solid #000; }
.selection { position: absolute; left: 1653px; top: 145px; width: 175px; height: 36px; border: 4px solid #1e7145; }
.handle { position: absolute; right: -6px; bottom: -6px; width: 10px; height: 10px; background: #1e7145; box-shadow: 0 0 0 1px #fff; }

/* Sheet tabs */
.tabbar {
  height: 53px; flex: none;
  background: #efefef;
  display: flex; align-items: flex-start;
  font-family: "Liberation Sans", Arial, sans-serif;
}
.nav { width: 0; height: 0; border-top: 13px solid transparent; border-bottom: 13px solid transparent; margin-top: 15px; }
.nav.left { border-right: 14px solid #b8b8b8; margin-left: 29px; }
.nav.right { border-left: 14px solid #b8b8b8; margin-left: 33px; }
.sheettab {
  width: 158px; height: 45px; margin-left: 31px;
  background: #fff;
  border-radius: 0 0 6px 6px;
  box-shadow: 0 2px 0 #b5b5b5;
  display: flex; align-items: center; justify-content: center;
  font-size: 24px; font-weight: 700; color: #1e8a57; padding: 2px 2px 0 0;
}
.plus { margin: 15px 0 0 28px; }
.tabsep { width: 2px; height: 42px; background: #d4d4d4; margin: 2px 0 0 26px; }

/* Status bar */
.status {
  height: 45px; flex: none;
  background: linear-gradient(#e6e6e6, #d2d2d2);
  border-top: 2px solid #a8a8a8;
  display: flex; align-items: center;
  font-size: 23.8px; color: #555;
  padding-left: 48px;
}
.ready { width: 106px; }
.acc { margin-right: 9px; }
.viewctl { margin-left: auto; display: flex; align-items: center; height: 100%; }
.viewbtn.on { width: 74px; height: 100%; background: #a6a6a6; display: flex; align-items: center; justify-content: center; }
.v2 { margin-left: 21px; }
.v3 { margin-left: 43px; }
.zm { margin-left: 38px; }
.slider { position: relative; width: 200px; height: 10px; border-radius: 5px; background: #999; margin-left: 14px; }
.thumb { position: absolute; left: 84px; top: -11px; width: 32px; height: 32px; border-radius: 50%; background: #fff; }
.zp { margin-left: 14px; }
.zoom { width: 146px; padding-left: 34px; font-size: 25px; font-weight: 300; color: #444; }
```
